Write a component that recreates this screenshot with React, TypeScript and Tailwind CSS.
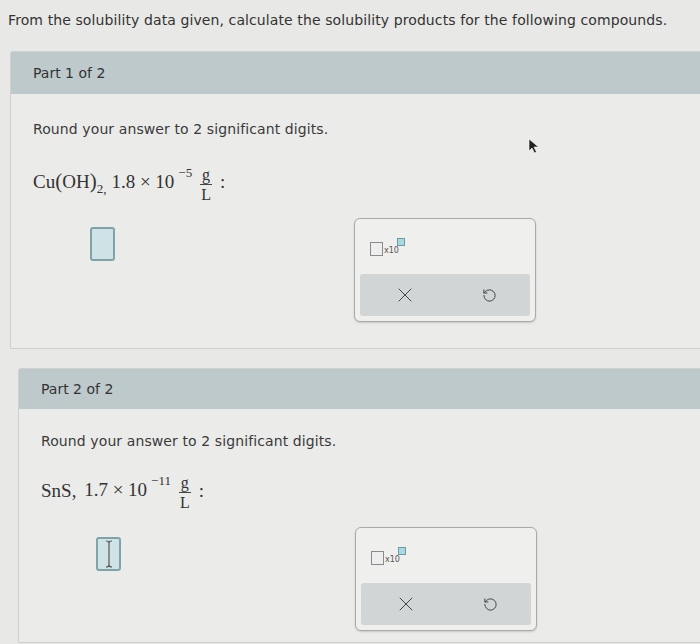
import React from 'react';
import { X, RotateCcw } from 'lucide-react';

const serif = { fontFamily: '"Liberation Serif", "Times New Roman", serif' };

const Fraction: React.FC = () => (
  <span className="inline-flex flex-col items-center align-middle mx-[7px] text-[16px] leading-[15px]">
    <span className="px-[2px]">g</span>
    <span className="w-[12px] h-px bg-[#444] my-[2px]" />
    <span className="px-[2px]">L</span>
  </span>
);

const Keypad: React.FC = () => (
  <div className="w-[182px] h-[104px] rounded-[6px] border border-[#a9a9a9] bg-[#efefee] p-[5px] flex flex-col shadow-[0_1px_2px_rgba(0,0,0,0.15)]">
    <div className="flex items-end h-[50px] pl-[10px] pb-[18px]">
      <span className="w-[13px] h-[14px] border border-[#8a8a8a] bg-[#eeeeee]" />
      <span className="text-[8px] leading-[8px] text-[#555] ml-[1px] mb-[1px]">x10</span>
      <span className="w-[8px] h-[8px] border border-[#6d9aa2] bg-[#a9d9e3] mb-[10px] -ml-[2px]" />
    </div>
    <div className="flex-1 rounded-[3px] bg-[#d2d5d5] flex items-center justify-around">
      <X size={24} strokeWidth={1} color="#444" />
      <RotateCcw size={15} strokeWidth={1.6} color="#444" />
    </div>
  </div>
);

const InputBox: React.FC<{ cursor?: boolean }> = ({ cursor }) => (
  <div className="w-[25px] h-[34px] rounded-[3px] border-2 border-[#7fa3a8] bg-[#cfe3e6] flex items-center justify-center">
    {cursor && (
      <svg width="8" height="28" viewBox="0 0 8 28">
        <path d="M1 1 Q4 1 4 3 Q4 1 7 1 M4 3 V25 M1 27 Q4 27 4 25 Q4 27 7 27" fill="none" stroke="#555" strokeWidth="1.2" />
      </svg>
    )}
  </div>
);

interface PartProps {
  label: string;
  formula: React.ReactNode;
  marginLeft: string;
  headerH: string;
  bodyH: string;
  bodyPt: string;
  formulaMt: string;
  rowMt: string;
  inputOffset: string;
  keypadOffset: string;
  cursor?: boolean;
}

const Part: React.FC<PartProps> = ({
  label, formula, marginLeft, headerH, bodyH, bodyPt, formulaMt, rowMt, inputOffset, keypadOffset, cursor,
}) => (
  <div className={`${marginLeft} -mr-[20px] border border-[#cfd0cf] rounded-tl-[3px]`}>
    <div className={`${headerH} bg-[#bec9cb] flex items-center pl-[22px] text-[14px] text-[#333]`}>{label}</div>
    <div className={`${bodyH} ${bodyPt} bg-[#ebebea] pl-[22px]`}>
      <div className="text-[14px] leading-[18px] text-[#3a3a3a] tracking-[0.1px]">Round your answer to 2 significant digits.</div>
      <div className={`${formulaMt} h-[40px] flex items-center text-[19px] text-[#333]`} style={serif}>
        {formula}
      </div>
      <div className={`flex items-start ${rowMt}`}>
        <div className={inputOffset}>
          <InputBox cursor={cursor} />
        </div>
        <div className={keypadOffset}>
          <Keypad />
        </div>
      </div>
    </div>
  </div>
);

const App: React.FC = () => {
  return (
    <div
      className="relative w-[700px] h-[644px] overflow-hidden bg-[#e8e8e6]"
      style={{ fontFamily: '"DejaVu Sans", Verdana, sans-serif' }}
    >
      <div className="pt-[11px] pl-[8px] text-[14px] leading-[18px] text-[#333] tracking-[0.1px]">
        From the solubility data given, calculate the solubility products for the following compounds.
      </div>

      <div className="mt-[22px]">
        <Part
          label="Part 1 of 2"
          marginLeft="ml-[10px]"
          headerH="h-[42px]"
          bodyH="h-[254px]"
          bodyPt="pt-[26px]"
          formulaMt="mt-[26px]"
          rowMt="mt-[14px]"
          inputOffset="ml-[57px] mt-[9px]"
          keypadOffset="ml-[239px]"
          formula={
            <span className="whitespace-nowrap">
              Cu<span className="text-[21px]">(</span>OH<span className="text-[21px]">)</span>
              <span className="relative top-[5px] text-[13px]">2,</span>
              <span className="ml-[5px]">1.8 × 10</span>
              <span className="relative -top-[11px] text-[13px] ml-[4px]">−5</span>
              <Fraction />
              <span>:</span>
            </span>
          }
        />
      </div>

      <div className="mt-[19px]">
        <Part
          label="Part 2 of 2"
          marginLeft="ml-[18px]"
          headerH="h-[40px]"
          bodyH="h-[233px]"
          bodyPt="pt-[23px]"
          formulaMt="mt-[22px]"
          rowMt="mt-[15px]"
          inputOffset="ml-[55px] mt-[10px]"
          keypadOffset="ml-[234px]"
          cursor
          formula={
            <span className="whitespace-nowrap">
              SnS, <span className="ml-[3px]">1.7 × 10</span>
              <span className="relative -top-[11px] text-[13px] ml-[4px]">−11</span>
              <Fraction />
              <span>:</span>
            </span>
          }
        />
      </div>

      <svg className="absolute left-[528px] top-[138px]" width="12" height="16" viewBox="0 0 12 16">
        <path d="M1 1 L1 13 L4 10 L6.5 15 L8.5 14 L6 9 L10.5 9 Z" fill="#222" stroke="#fff" strokeWidth="0.6" />
      </svg>
    </div>
  );
};

export default App;
